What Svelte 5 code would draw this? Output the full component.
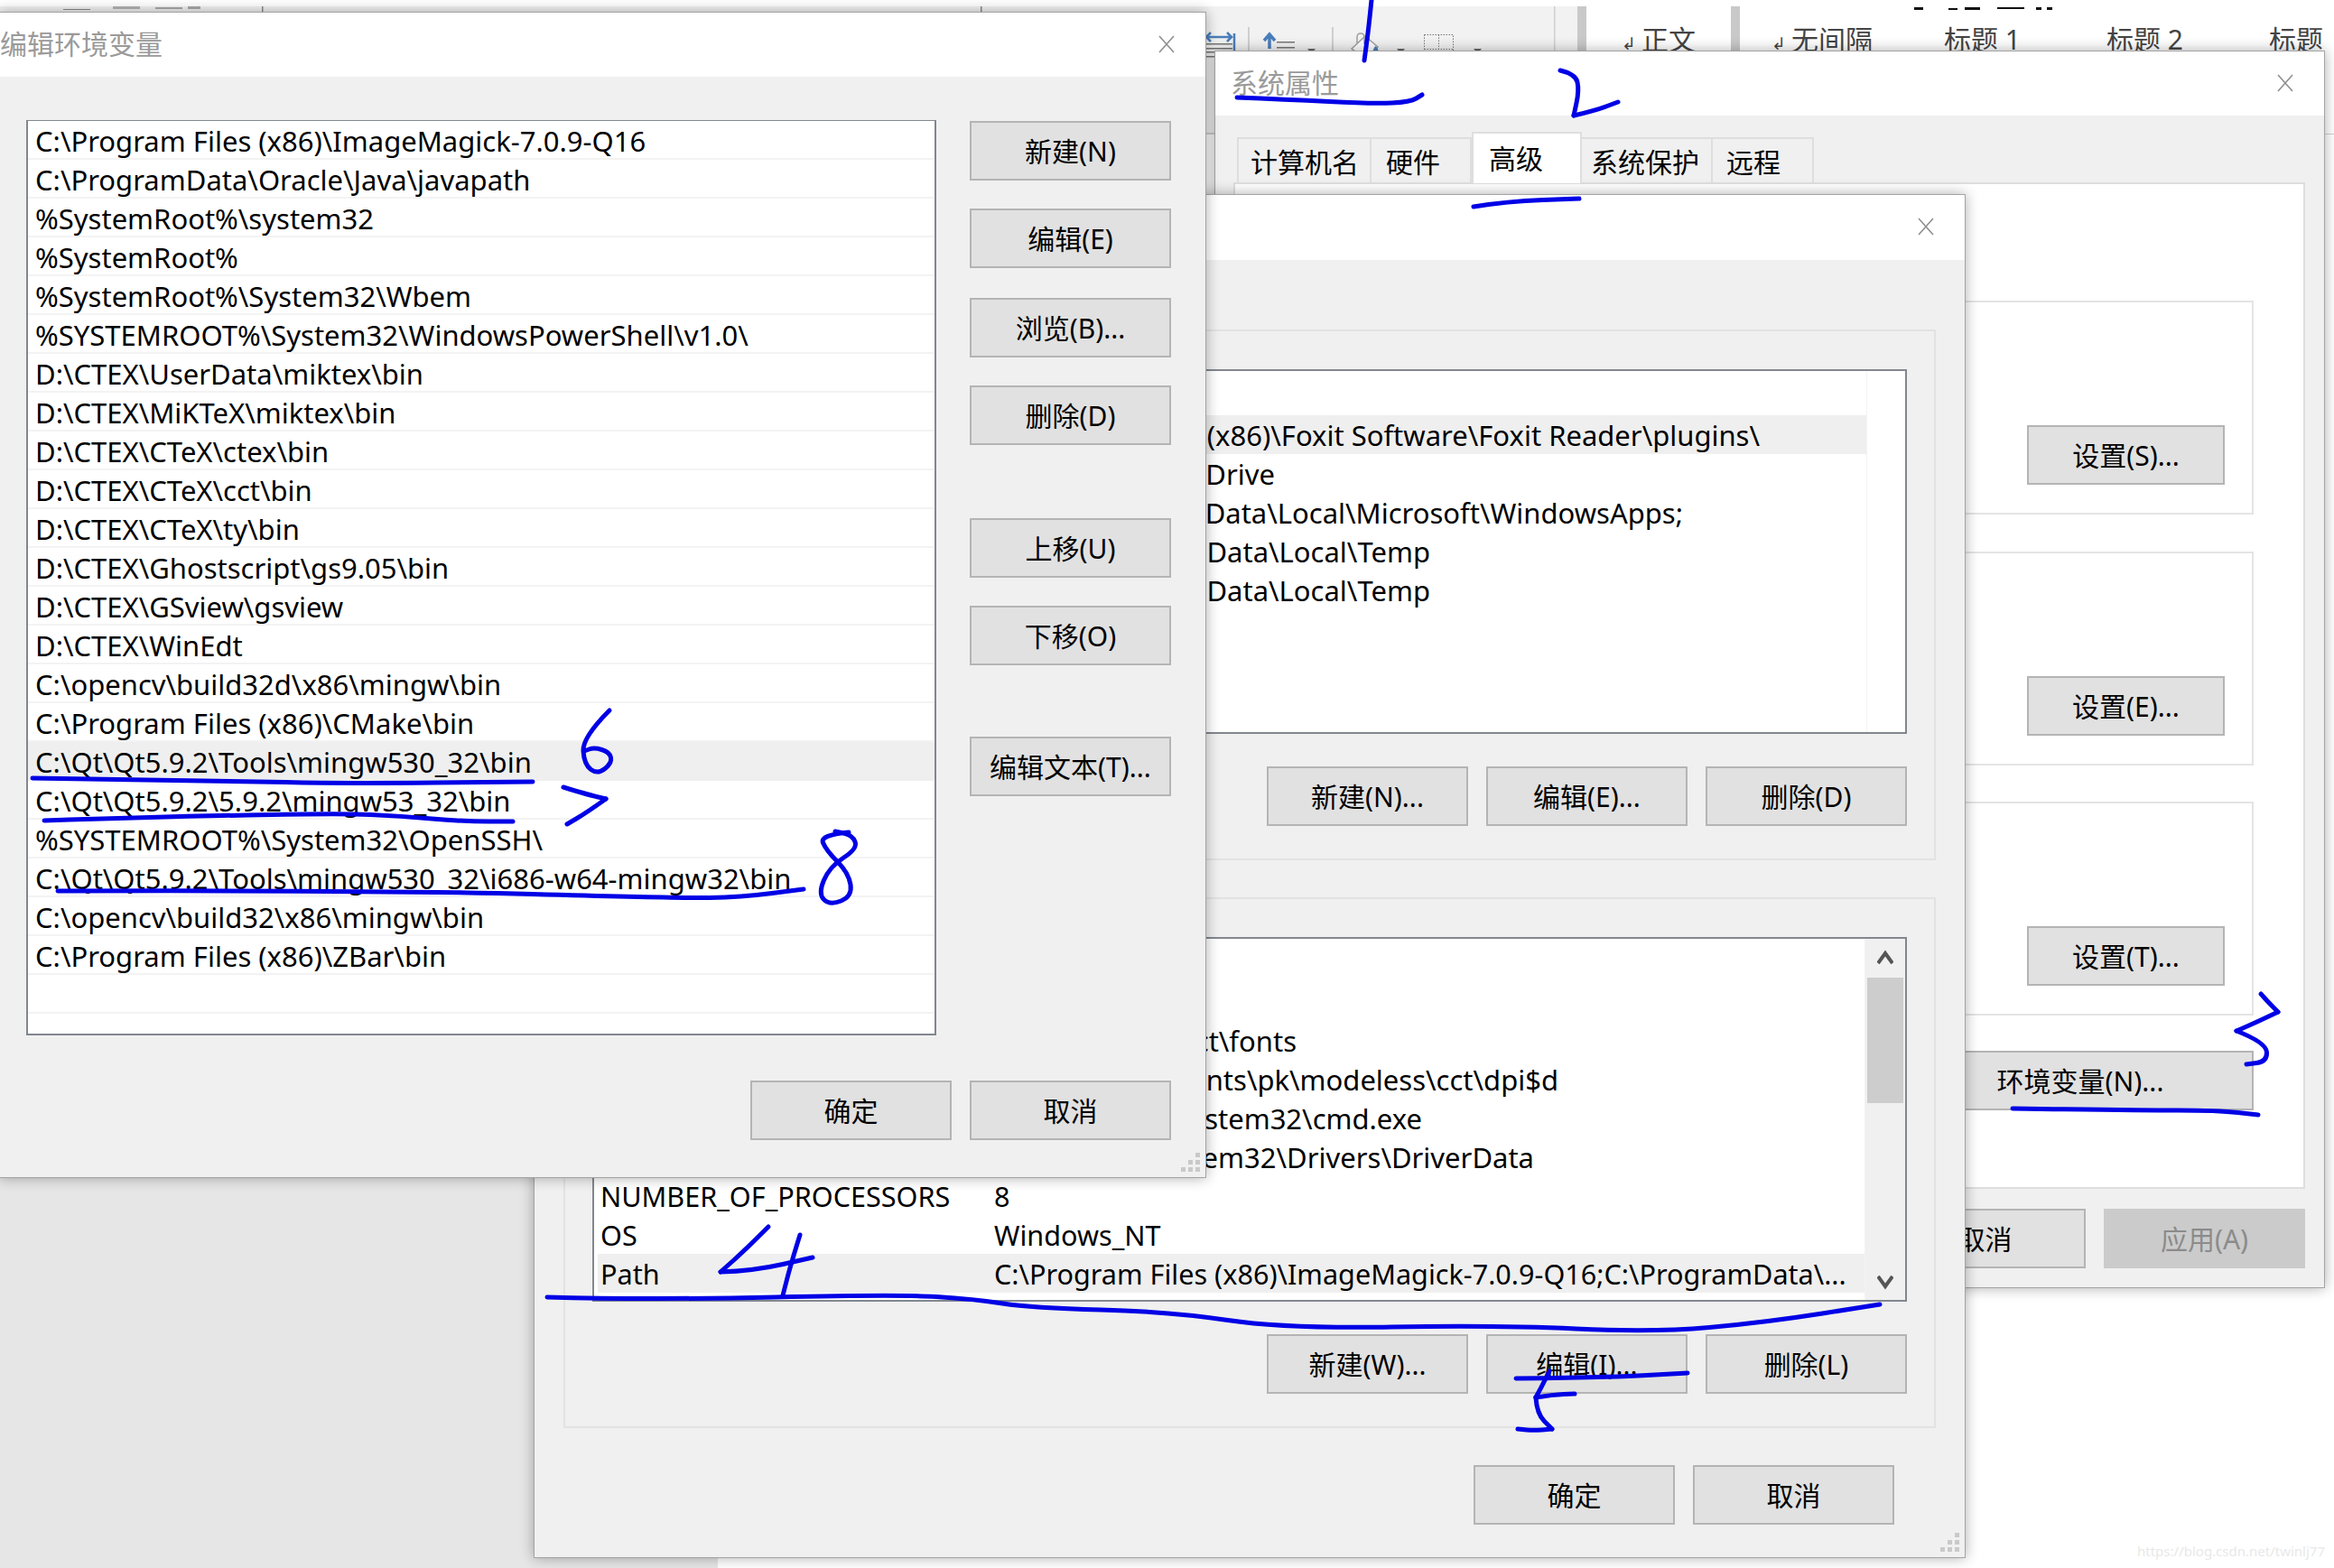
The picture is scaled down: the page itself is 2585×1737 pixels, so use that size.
<script>
  const pathEntries = [
    'C:\\Program Files (x86)\\ImageMagick-7.0.9-Q16',
    'C:\\ProgramData\\Oracle\\Java\\javapath',
    '%SystemRoot%\\system32',
    '%SystemRoot%',
    '%SystemRoot%\\System32\\Wbem',
    '%SYSTEMROOT%\\System32\\WindowsPowerShell\\v1.0\\',
    'D:\\CTEX\\UserData\\miktex\\bin',
    'D:\\CTEX\\MiKTeX\\miktex\\bin',
    'D:\\CTEX\\CTeX\\ctex\\bin',
    'D:\\CTEX\\CTeX\\cct\\bin',
    'D:\\CTEX\\CTeX\\ty\\bin',
    'D:\\CTEX\\Ghostscript\\gs9.05\\bin',
    'D:\\CTEX\\GSview\\gsview',
    'D:\\CTEX\\WinEdt',
    'C:\\opencv\\build32d\\x86\\mingw\\bin',
    'C:\\Program Files (x86)\\CMake\\bin',
    'C:\\Qt\\Qt5.9.2\\Tools\\mingw530_32\\bin',
    'C:\\Qt\\Qt5.9.2\\5.9.2\\mingw53_32\\bin',
    '%SYSTEMROOT%\\System32\\OpenSSH\\',
    'C:\\Qt\\Qt5.9.2\\Tools\\mingw530_32\\i686-w64-mingw32\\bin',
    'C:\\opencv\\build32\\x86\\mingw\\bin',
    'C:\\Program Files (x86)\\ZBar\\bin',
    '',
  ]

  // fragments stick out from under the edit window, so they are placed by where they end
  const userVars = [
    { end: 1948, text: '(x86)\\Foxit Software\\Foxit Reader\\plugins\\', selected: true },
    { end: 1411, text: 'Drive' },
    { end: 1863, text: 'Data\\Local\\Microsoft\\WindowsApps;' },
    { end: 1583, text: 'Data\\Local\\Temp' },
    { end: 1583, text: 'Data\\Local\\Temp' },
  ]

  const sysFragments = [
    { end: 0, text: '' },
    { end: 0, text: '' },
    { end: 1435, text: 'cct\\fonts' },
    { end: 1725, text: 'fonts\\pk\\modeless\\cct\\dpi$d' },
    { end: 1574, text: 'System32\\cmd.exe' },
    { end: 1698, text: 'System32\\Drivers\\DriverData' },
  ]

  const sysVars = [
    { name: 'NUMBER_OF_PROCESSORS', value: '8' },
    { name: 'OS', value: 'Windows_NT' },
    { name: 'Path', value: 'C:\\Program Files (x86)\\ImageMagick-7.0.9-Q16;C:\\ProgramData\\...', selected: true },
  ]

  const tabs = ['计算机名', '硬件', '高级', '系统保护', '远程']
  const groupButtons = ['设置(S)...', '设置(E)...', '设置(T)...']

  // pen strokes drawn on top of the screenshot
  const ink = [
    [[1519, 0], [1516, 30], [1511, 67]],
    [[1370, 108], [1423, 110], [1521, 115], [1562, 113], [1575, 105]],
    [[1728, 78], [1745, 82], [1749, 100], [1743, 128]],
    [[1743, 128], [1768, 122], [1792, 113]],
    [[1632, 229], [1669, 223], [1749, 220]],
    [[675, 787], [645, 817], [647, 847], [662, 858], [678, 845], [675, 833], [658, 828], [647, 832]],
    [[36, 862], [256, 865], [376, 868], [590, 866]],
    [[49, 909], [171, 905], [376, 901], [444, 904], [513, 910], [568, 910]],
    [[624, 872], [650, 880], [671, 885]],
    [[671, 885], [650, 900], [628, 913]],
    [[940, 922], [908, 925], [915, 942], [940, 967], [944, 993], [919, 1003], [906, 990], [919, 960], [950, 940], [944, 925], [925, 921]],
    [[64, 987], [427, 986], [752, 995], [820, 994], [890, 985]],
    [[851, 1359], [825, 1385], [798, 1409]],
    [[798, 1409], [834, 1408], [900, 1393]],
    [[886, 1368], [876, 1400], [867, 1435]],
    [[606, 1437], [721, 1440], [995, 1434], [1079, 1439], [1142, 1449], [1297, 1453], [1423, 1472], [1660, 1468], [1831, 1476], [1955, 1465], [2082, 1445]],
    [[1679, 1527], [1778, 1526], [1869, 1521]],
    [[1716, 1519], [1708, 1535], [1701, 1548]],
    [[1701, 1548], [1720, 1545], [1744, 1544]],
    [[1701, 1548], [1702, 1566], [1719, 1583]],
    [[1719, 1583], [1701, 1585], [1681, 1583]],
    [[2504, 1101], [2512, 1110], [2523, 1121]],
    [[2523, 1121], [2500, 1132], [2477, 1142]],
    [[2477, 1142], [2510, 1155], [2511, 1176], [2488, 1179]],
    [[2229, 1228], [2368, 1230], [2456, 1230], [2501, 1235]],
  ]

  function smooth(pts) {
    let d = `M${pts[0][0]} ${pts[0][1]}`
    for (let i = 1; i < pts.length - 1; i++) {
      const mx = (pts[i][0] + pts[i + 1][0]) / 2
      const my = (pts[i][1] + pts[i + 1][1]) / 2
      d += ` Q${pts[i][0]} ${pts[i][1]} ${mx} ${my}`
    }
    const last = pts[pts.length - 1]
    return d + ` L${last[0]} ${last[1]}`
  }
</script>

{#snippet close()}
  <svg class="close" width="20" height="20" viewBox="0 0 20 20">
    <path d="M2 1 L18 19 M18 1 L2 19" stroke="#8f8f8f" stroke-width="1.6" fill="none" />
  </svg>
{/snippet}

{#snippet grip()}
  <svg class="grip" width="21" height="21" viewBox="0 0 21 21" fill="#c9c9c9">
    <rect x="16" y="0" width="5" height="5" />
    <rect x="8" y="8" width="5" height="5" />
    <rect x="16" y="8" width="5" height="5" />
    <rect x="0" y="16" width="5" height="5" />
    <rect x="8" y="16" width="5" height="5" />
    <rect x="16" y="16" width="5" height="5" />
  </svg>
{/snippet}

<div class="desk">
  <div class="ground"></div>

  <div class="ribbon">
    <div class="tools"></div>
    <div class="bar"></div>
    <div class="style first"><span class="ret">↲</span>正文</div>
    <div class="bar"></div>
    <div class="style second"><span class="ret">↲</span>无间隔</div>
    <div class="style">标题 1</div>
    <div class="style">标题 2</div>
    <div class="style last">标题</div>
    <svg class="ribbon-art" width="2585" height="60" viewBox="0 0 2585 60">
      <g fill="#777">
        <rect x="1335" y="41" width="30" height="1.5" />
        <rect x="1335" y="46" width="30" height="1.5" />
        <rect x="1335" y="50" width="30" height="1.5" />
        <rect x="1335" y="55" width="30" height="1.5" />
        <rect x="1414" y="39" width="20" height="1.5" />
        <rect x="1414" y="45" width="20" height="1.5" />
        <rect x="1414" y="51" width="20" height="1.5" />
        <rect x="1414" y="55" width="20" height="1.5" />
      </g>
      <path d="M1336 34 H1364 M1341 29 L1336 34 L1341 39 M1359 29 L1364 34 L1359 39 M1367 30 V56" stroke="#4a7ebb" stroke-width="2.5" fill="none" />
      <path d="M1406 56 V52 M1406 47 V33 M1400 38 L1406 31 L1412 38" stroke="#4a7ebb" stroke-width="3.5" fill="none" />
      <rect x="1382" y="23" width="2" height="34" fill="#cfcfcf" />
      <rect x="1475" y="23" width="2" height="34" fill="#cfcfcf" />
      <rect x="1721" y="0" width="1.5" height="57" fill="#cfcfcf" />
      <path d="M1497 47 L1512 33 L1526 45 L1511 57 Z" fill="#fff" stroke="#a0a0a0" stroke-width="1.5" />
      <path d="M1503 41 V34 Q1503 30 1507 30 Q1511 30 1511 34 V42" fill="none" stroke="#a0a0a0" stroke-width="1.5" />
      <path d="M1523 44 Q1528 46 1526 55 Q1522 52 1521 48 Z" fill="#4a7ebb" />
      <path d="M1577.5 31.5 H1609.5 V56 M1577.5 31.5 V56 M1593.5 31.5 V56 M1577.5 47.5 H1609.5" fill="none" stroke="#777" stroke-width="1" stroke-dasharray="1.5 1.5" />
      <g fill="#666">
        <path d="M1448 47 H1457 L1452.5 52 Z" />
        <path d="M1547 47 H1556 L1551.5 52 Z" />
        <path d="M1632 47 H1641 L1636.5 52 Z" />
      </g>
      <g fill="#111">
        <rect x="2120" y="1" width="10" height="3" />
        <rect x="2158" y="2" width="10" height="2" />
        <rect x="2176" y="1" width="17" height="3" />
        <rect x="2212" y="1" width="30" height="2" />
        <rect x="2255" y="1" width="6" height="3" />
        <rect x="2267" y="1" width="6" height="3" />
      </g>
      <g fill="#8a8a8a">
        <rect x="70" y="3" width="30" height="1" />
        <rect x="125" y="0" width="30" height="3" opacity=".6" />
        <rect x="172" y="1" width="30" height="2" opacity=".7" />
        <rect x="208" y="0" width="14" height="3" opacity=".7" />
        <rect x="290" y="0" width="1.5" height="6" />
        <rect x="1086" y="0" width="1.5" height="6" />
      </g>
    </svg>
  </div>

  <!-- system properties -->
  <section class="win sys">
    <header class="title">
      <span>系统属性</span>
      {@render close()}
    </header>
    <div class="body">
      <div class="tabs">
        {#each tabs as tab, i}
          <div class="tab" class:active={i === 2}>{tab}</div>
        {/each}
      </div>
      <div class="page">
        {#each groupButtons as label}
          <div class="group">
            <button class="btn setting">{label}</button>
          </div>
        {/each}
        <div class="env-row">
          <button class="btn env">环境变量(N)...</button>
        </div>
      </div>
      <div class="foot">
        <button class="btn">确定</button>
        <button class="btn">取消</button>
        <button class="btn applied">应用(A)</button>
      </div>
    </div>
  </section>

  <!-- environment variables -->
  <section class="win env-win">
    <header class="title">
      <span></span>
      {@render close()}
    </header>
    <div class="body">
      <div class="frame">
        <div class="list user-list">
          <div class="rows">
            {#each userVars as row}
              <div class="row var-row" class:selected={row.selected}>
                <span class="frag" style:width="{row.end - 657}px">{row.text}</span>
              </div>
            {/each}
          </div>
          <div class="gutter"></div>
        </div>
        <div class="actions">
          <button class="btn">新建(N)...</button>
          <button class="btn">编辑(E)...</button>
          <button class="btn">删除(D)</button>
        </div>
      </div>

      <div class="frame second-frame">
        <div class="list sys-list">
          <div class="rows">
            {#each sysFragments as row}
              <div class="row var-row">
                <span class="frag" style:width="{row.end ? row.end - 657 : 0}px">{row.text}</span>
              </div>
            {/each}
            {#each sysVars as row}
              <div class="row var-row named" class:selected={row.selected}>
                <span class="name">{row.name}</span>
                <span>{row.value}</span>
              </div>
            {/each}
          </div>
          <div class="scrollbar">
            <div class="arrow">
              <svg width="18" height="20" viewBox="0 0 18 20"><path d="M1 15 L9 4 L17 15" fill="none" stroke="#555" stroke-width="4" /></svg>
            </div>
            <div class="track"><div class="thumb"></div></div>
            <div class="arrow">
              <svg width="18" height="20" viewBox="0 0 18 20"><path d="M1 5 L9 16 L17 5" fill="none" stroke="#555" stroke-width="4" /></svg>
            </div>
          </div>
        </div>
        <div class="actions">
          <button class="btn">新建(W)...</button>
          <button class="btn">编辑(I)...</button>
          <button class="btn">删除(L)</button>
        </div>
      </div>

      <div class="foot">
        <button class="btn">确定</button>
        <button class="btn">取消</button>
      </div>
    </div>
    {@render grip()}
  </section>

  <!-- edit environment variable -->
  <section class="win edit">
    <header class="title">
      <span>编辑环境变量</span>
      {@render close()}
    </header>
    <div class="body">
      <div class="main">
        <div class="path-list">
          {#each pathEntries as entry, i}
            <div class="row path-row" class:selected={i === 16}>{entry}</div>
          {/each}
        </div>
        <div class="side">
          <button class="btn">新建(N)</button>
          <button class="btn">编辑(E)</button>
          <button class="btn browse">浏览(B)...</button>
          <button class="btn">删除(D)</button>
          <button class="btn after-gap">上移(U)</button>
          <button class="btn">下移(O)</button>
          <button class="btn after-gap wider-gap">编辑文本(T)...</button>
        </div>
      </div>
      <div class="foot">
        <button class="btn">确定</button>
        <button class="btn">取消</button>
      </div>
    </div>
    {@render grip()}
  </section>

  <svg class="ink" width="2585" height="1737" viewBox="0 0 2585 1737">
    {#each ink as stroke}
      <path d={smooth(stroke)} />
    {/each}
  </svg>

  <div class="mark">https://blog.csdn.net/twinlj77</div>
</div>

<style>
  :global(body) {
    margin: 0;
    background: #fff;
  }

  .desk {
    position: relative;
    width: 2585px;
    height: 1737px;
    overflow: hidden;
    background: #fff;
    font-family: "Noto Sans", "Noto Sans CJK SC", sans-serif;
    font-size: 30px;
    color: #000;
  }

  .ground {
    position: absolute;
    left: 0;
    top: 1250px;
    width: 795px;
    height: 487px;
    background: #e6e6e6;
  }

  .ribbon {
    position: absolute;
    left: 0;
    top: 7px;
    width: 2585px;
    height: 142px;
    display: flex;
    border-bottom: 1px solid #d0d0d0;
    box-sizing: border-box;
  }

  .tools {
    width: 1747px;
    background: #f2f2f2;
    border-bottom: 1px solid #d0d0d0;
  }

  .bar {
    width: 10px;
    height: 49px;
    background: #c9c9c9;
  }

  .style {
    width: 180px;
    box-sizing: border-box;
    padding-top: 17px;
    color: #444;
    font-size: 30px;
    line-height: 40px;
    white-space: nowrap;
  }

  .style.first {
    width: 160px;
    padding-left: 39px;
  }

  .style.second {
    width: 226px;
    padding-left: 35px;
  }

  .style.last {
    width: 72px;
  }

  .ret {
    font-family: "DejaVu Sans", sans-serif;
    font-size: 19px;
    margin-right: 6px;
  }

  .ribbon-art {
    position: absolute;
    left: 0;
    top: 0;
  }

  .win {
    position: absolute;
    box-sizing: border-box;
    background: #f0f0f0;
    border: 1px solid #a3a3a3;
    box-shadow: 0 0 14px rgba(0, 0, 0, 0.32);
  }

  .sys {
    left: 1345px;
    top: 56px;
    width: 1230px;
    height: 1371px;
  }

  .env-win {
    left: 591px;
    top: 215px;
    width: 1586px;
    height: 1511px;
  }

  .edit {
    left: -2px;
    top: 13px;
    width: 1338px;
    height: 1292px;
  }

  .title {
    height: 71px;
    background: #fff;
    display: flex;
    align-items: center;
    justify-content: space-between;
    box-sizing: border-box;
    padding-right: 33px;
    padding-bottom: 2px;
    color: #9a9a9a;
    line-height: 1;
  }

  .sys .title {
    padding-left: 17px;
  }

  .edit .title {
    padding-left: 1px;
  }

  .close {
    display: block;
    flex: none;
  }

  .grip {
    position: absolute;
    right: 6px;
    bottom: 6px;
  }

  .btn {
    width: 223px;
    height: 66px;
    flex: none;
    box-sizing: border-box;
    padding: 0 0 2px;
    background: #e1e1e1;
    border: 2px solid #b4b4b4;
    border-radius: 0;
    color: #000;
    font: inherit;
    white-space: nowrap;
  }

  .row {
    height: 43px;
    line-height: 44px;
    box-sizing: border-box;
    white-space: nowrap;
  }

  .selected {
    background: #efefef;
  }

  .foot {
    display: flex;
    justify-content: flex-end;
    gap: 20px;
  }

  /* system properties */
  .sys .body {
    padding: 24px 21px 0 20px;
  }

  .tabs {
    display: flex;
    align-items: flex-end;
    height: 50px;
    padding-left: 4px;
  }

  .tab {
    height: 50px;
    box-sizing: border-box;
    border: 2px solid #dedede;
    border-bottom: none;
    border-left: none;
    line-height: 52px;
    white-space: nowrap;
  }

  .tab:nth-child(1) {
    width: 149px;
    padding-left: 13px;
    border-left: 2px solid #dedede;
  }

  .tab:nth-child(2) {
    width: 111px;
    padding-left: 16px;
  }

  .tab:nth-child(3) {
    width: 122px;
    padding-left: 17px;
  }

  .tab:nth-child(4) {
    width: 145px;
    padding-left: 10px;
  }

  .tab:nth-child(5) {
    width: 112px;
    padding-left: 15px;
  }

  .tab.active {
    height: 57px;
    margin-bottom: -1px;
    background: #fff;
    line-height: 55px;
    position: relative;
    z-index: 1;
    border-top: 2px solid #dedede;
    border-right: 2px solid #dedede;
    border-left: 2px solid #dedede;
  }

  .page {
    height: 1115px;
    box-sizing: border-box;
    background: #fff;
    border: 2px solid #dedede;
    padding: 129px 55px 0 0;
    display: flex;
    flex-direction: column;
    align-items: flex-end;
  }

  .group {
    width: 800px;
    height: 237px;
    box-sizing: border-box;
    display: flex;
    justify-content: flex-end;
    align-items: flex-end;
    padding: 0 30px 31px 0;
    border: 2px solid #e4e4e4;
    margin-bottom: 41px;
  }

  .group:nth-child(2) {
    margin-bottom: 40px;
  }

  .group:nth-child(3) {
    margin-bottom: 39px;
  }

  .btn.setting {
    width: 219px;
  }

  .btn.env {
    width: 384px;
  }

  .sys .foot {
    margin-top: 22px;
  }

  .applied {
    background: #cbcbcb;
    border-color: #cbcbcb;
    color: #8b8b8b;
  }

  /* environment variables */
  .env-win .title {
    height: 72px;
  }

  .env-win .body {
    padding: 77px 32px 0;
  }

  .frame {
    border: 2px solid #e2e2e2;
    box-sizing: border-box;
    height: 588px;
    padding: 42px 30px 0;
    display: flex;
    flex-direction: column;
    align-items: stretch;
  }

  .second-frame {
    margin-top: 41px;
  }

  .list {
    height: 404px;
    box-sizing: border-box;
    background: #fff;
    border: 2px solid #82878f;
    display: flex;
    font-size: 30.6px;
  }

  .rows {
    flex: 1;
    padding-left: 4px;
    border-right: 1px solid #f3f3f3;
  }

  .user-list .rows {
    padding-top: 49px;
  }

  .sys-list .rows {
    padding-top: 5px;
  }

  .gutter {
    width: 42px;
  }

  .frag {
    display: block;
    margin-left: -4px;
    text-align: right;
    font-size: 31px;
  }

  .var-row.named {
    display: flex;
    padding-left: 3px;
  }

  .name {
    width: 436px;
    flex: none;
  }

  .scrollbar {
    width: 44px;
    background: #f0f0f0;
    display: flex;
    flex-direction: column;
  }

  .arrow {
    height: 43px;
    display: flex;
    align-items: center;
    justify-content: center;
  }

  .track {
    flex: 1;
    padding: 0 2px;
  }

  .thumb {
    height: 139px;
    background: #cdcdcd;
  }

  .actions {
    display: flex;
    justify-content: flex-end;
    gap: 20px;
    margin-top: 36px;
  }

  .env-win .foot {
    margin-top: 41px;
    padding-right: 46px;
  }

  /* edit window */
  .edit .body {
    padding: 48px 38px 0 30px;
  }

  .main {
    display: flex;
    justify-content: space-between;
  }

  .path-list {
    width: 1008px;
    height: 1014px;
    box-sizing: border-box;
    background: #fff;
    border: 2px solid #82878f;
    border-top-width: 1px;
    font-size: 31px;
  }

  .path-row {
    padding-left: 8px;
    border-bottom: 2px solid #f3f3f3;
  }

  .path-row.selected {
    border-bottom-color: #efefef;
  }

  .side {
    display: flex;
    flex-direction: column;
    gap: 31px;
    padding-top: 1px;
  }

  .browse {
    margin-top: 2px;
  }

  .after-gap {
    margin-top: 50px;
  }

  .wider-gap {
    margin-top: 48px;
  }

  .edit .foot {
    margin-top: 50px;
  }

  .ink {
    position: absolute;
    left: 0;
    top: 0;
    pointer-events: none;
  }

  .ink path {
    fill: none;
    stroke: #0000e6;
    stroke-width: 5;
    stroke-linecap: round;
    stroke-linejoin: round;
  }

  .mark {
    position: absolute;
    right: 10px;
    top: 1708px;
    color: #e8e8e8;
    font-size: 15px;
  }
</style>
